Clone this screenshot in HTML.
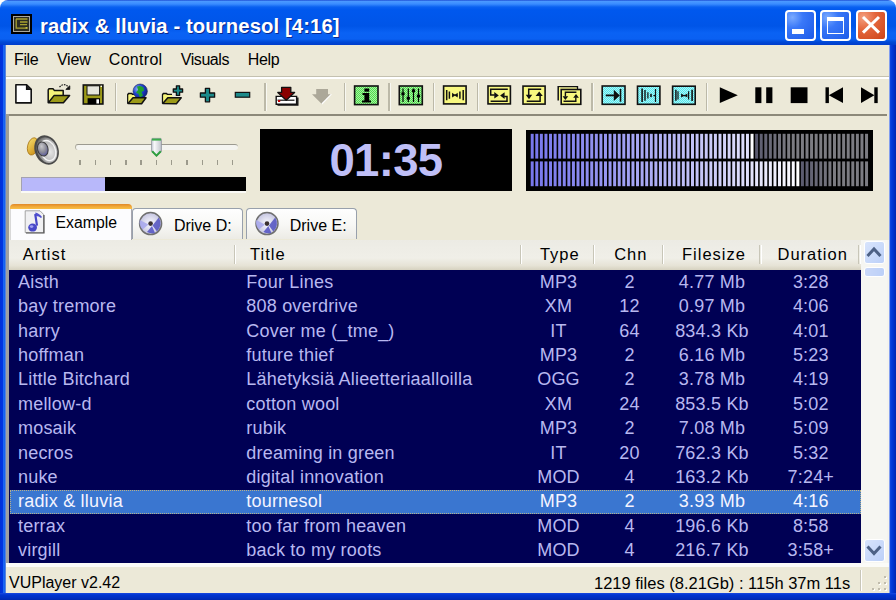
<!DOCTYPE html><html><head><meta charset="utf-8"><style>
*{margin:0;padding:0;box-sizing:border-box}
html,body{width:896px;height:600px;overflow:hidden;background:#fff}
body{position:relative;font-family:"Liberation Sans",sans-serif}
.a{position:absolute}
.t{position:absolute;white-space:nowrap;line-height:1}
</style></head><body>
<div class="a" style="left:0;top:0;width:896px;height:600px;border-radius:8px 8px 0 0;background:linear-gradient(to bottom,#1f4fd4 0px,#4a98ff 1.5px,#3a8cff 4px,#0b61f0 7px,#0058ee 10px,#0055e8 26px,#0a62f4 33px,#0a60f2 39px,#0049d6 42px,#003ccc 45px,#0038d8 46px);"></div>
<div class="a" style="left:0;top:45px;width:6px;height:555px;background:linear-gradient(to right,#0030d8 0,#0034e0 2.5px,#1a66f2 3.5px,#1560f0 5px,#9aa8c8 6px);"></div>
<div class="a" style="left:889px;top:45px;width:7px;height:555px;background:linear-gradient(to right,#f4f4ff 0,#1048e0 1px,#0038d8 3px,#0030c8 5px,#0028b0 7px);"></div>
<div class="a" style="left:0;top:593px;width:896px;height:7px;background:linear-gradient(to bottom,#1848e0 0,#0034d0 2px,#002ec0 5px,#0028b0 7px);"></div>
<div class="a" style="left:6px;top:45px;width:883px;height:548px;background:#ece9d8;"></div>
<div class="a" style="left:10.8px;top:14px;width:21.2px;height:19.5px;background:#000;"></div>
<div class="a" style="left:12.5px;top:15.5px;width:17.8px;height:16.5px;background:#2c2c22;border:1.4px solid #a8a8a0;"></div>
<svg class="a" style="left:0;top:0" width="60" height="45"><g stroke="#a8a030" stroke-width="1.3" fill="none"><path d="M16 19H27.5M16.2 19V28.2H27.5M20 22H27.5M20 24.6H27"/></g><rect x="25.6" y="27" width="1.8" height="1.6" fill="#c8c040"/></svg>
<div class="t" style="left:40px;top:15.9px;font-size:20.3px;font-weight:bold;color:#fff;text-shadow:1px 1px 0 #0a2a90;letter-spacing:0.1px">radix &amp; lluvia - tournesol [4:16]</div>
<div class="a" style="left:785px;top:10px;width:31px;height:31px;border:2px solid #fff;border-radius:4px;background:radial-gradient(circle at 20% 20%,#7aaaff 0,#3a78f8 35%,#1c5ae8 100%);"></div>
<div class="a" style="left:820px;top:10px;width:31px;height:31px;border:2px solid #fff;border-radius:4px;background:radial-gradient(circle at 20% 20%,#7aaaff 0,#3a78f8 35%,#1c5ae8 100%);"></div>
<div class="a" style="left:855.5px;top:10px;width:31px;height:31px;border:2px solid #fff;border-radius:4px;background:radial-gradient(circle at 20% 20%,#f4a080 0,#e4663c 40%,#cc4418 100%);"></div>
<div class="a" style="left:792px;top:29px;width:11.5px;height:4.5px;background:#fff;"></div>
<div class="a" style="left:827px;top:16.5px;width:16.5px;height:17px;border:1.6px solid #fff;border-top-width:4.5px;"></div>
<svg class="a" style="left:855px;top:10px" width="32" height="32"><path d="M8 7L24 22.6M24 7L8 22.6" stroke="#fff" stroke-width="3"/></svg>
<div class="t" style="left:14.1px;top:51.8px;font-size:16px;letter-spacing:-0.4px;color:#000">File</div>
<div class="t" style="left:56.9px;top:51.8px;font-size:16px;letter-spacing:-0.2px;color:#000">View</div>
<div class="t" style="left:108.8px;top:51.8px;font-size:16px;letter-spacing:0.3px;color:#000">Control</div>
<div class="t" style="left:180.8px;top:51.8px;font-size:16px;letter-spacing:-0.45px;color:#000">Visuals</div>
<div class="t" style="left:247.7px;top:51.8px;font-size:16px;letter-spacing:-0.3px;color:#000">Help</div>
<div class="a" style="left:6px;top:75.5px;width:883px;height:1.8px;background:#c4c1b0;"></div>
<div class="a" style="left:6px;top:77.3px;width:883px;height:1.7px;background:#fff;"></div>
<div class="a" style="left:6px;top:113.5px;width:881px;height:2px;background:#8c897a;"></div>
<div class="a" style="left:6px;top:113.5px;width:2.5px;height:127px;background:#a09e94;"></div>
<div class="a" style="left:114.5px;top:82.5px;width:1.6px;height:28.5px;background:#bcb9a8;"></div>
<div class="a" style="left:116.1px;top:82.5px;width:1px;height:28.5px;background:#f8f8f2;"></div>
<div class="a" style="left:264.2px;top:82.5px;width:1.6px;height:28.5px;background:#bcb9a8;"></div>
<div class="a" style="left:265.8px;top:82.5px;width:1px;height:28.5px;background:#f8f8f2;"></div>
<div class="a" style="left:343.5px;top:82.5px;width:1.6px;height:28.5px;background:#bcb9a8;"></div>
<div class="a" style="left:345.1px;top:82.5px;width:1px;height:28.5px;background:#f8f8f2;"></div>
<div class="a" style="left:388px;top:82.5px;width:1.6px;height:28.5px;background:#bcb9a8;"></div>
<div class="a" style="left:389.6px;top:82.5px;width:1px;height:28.5px;background:#f8f8f2;"></div>
<div class="a" style="left:432.6px;top:82.5px;width:1.6px;height:28.5px;background:#bcb9a8;"></div>
<div class="a" style="left:434.20000000000005px;top:82.5px;width:1px;height:28.5px;background:#f8f8f2;"></div>
<div class="a" style="left:476.6px;top:82.5px;width:1.6px;height:28.5px;background:#bcb9a8;"></div>
<div class="a" style="left:478.20000000000005px;top:82.5px;width:1px;height:28.5px;background:#f8f8f2;"></div>
<div class="a" style="left:591.2px;top:82.5px;width:1.6px;height:28.5px;background:#bcb9a8;"></div>
<div class="a" style="left:592.8000000000001px;top:82.5px;width:1px;height:28.5px;background:#f8f8f2;"></div>
<div class="a" style="left:705.5px;top:82.5px;width:1.6px;height:28.5px;background:#bcb9a8;"></div>
<div class="a" style="left:707.1px;top:82.5px;width:1px;height:28.5px;background:#f8f8f2;"></div>
<div class="a" style="left:75px;top:143.5px;width:163px;height:6px;border-radius:3px;background:#f4f4f0;border-top:1.5px solid #9c9a90;border-left:1px solid #b0aea0"></div>
<div class="a" style="left:79.40px;top:159.6px;width:1.4px;height:5px;background:#9c9a8c;"></div>
<div class="a" style="left:94.67px;top:159.6px;width:1.4px;height:5px;background:#9c9a8c;"></div>
<div class="a" style="left:109.94px;top:159.6px;width:1.4px;height:5px;background:#9c9a8c;"></div>
<div class="a" style="left:125.21px;top:159.6px;width:1.4px;height:5px;background:#9c9a8c;"></div>
<div class="a" style="left:140.48px;top:159.6px;width:1.4px;height:5px;background:#9c9a8c;"></div>
<div class="a" style="left:155.75px;top:159.6px;width:1.4px;height:5px;background:#9c9a8c;"></div>
<div class="a" style="left:171.02px;top:159.6px;width:1.4px;height:5px;background:#9c9a8c;"></div>
<div class="a" style="left:186.29px;top:159.6px;width:1.4px;height:5px;background:#9c9a8c;"></div>
<div class="a" style="left:201.56px;top:159.6px;width:1.4px;height:5px;background:#9c9a8c;"></div>
<div class="a" style="left:216.83px;top:159.6px;width:1.4px;height:5px;background:#9c9a8c;"></div>
<div class="a" style="left:232.10px;top:159.6px;width:1.4px;height:5px;background:#9c9a8c;"></div>
<div class="a" style="left:21.3px;top:177.2px;width:224.7px;height:13.8px;background:#000;"></div>
<div class="a" style="left:21.3px;top:177.2px;width:83.9px;height:13.8px;background:#b8b8fa;border-top:1.6px solid #a4a2b0;border-left:1.6px solid #a4a2b0"></div>
<div class="a" style="left:21.3px;top:191px;width:225px;height:1.5px;background:#fafaf6;"></div>
<div class="a" style="left:260.3px;top:129.2px;width:251.5px;height:61.6px;background:#000;"></div>
<div class="t" style="left:329.5px;top:137.8px;font-size:45.5px;letter-spacing:-0.7px;font-weight:bold;color:#bfbff7">01:35</div>
<div class="a" style="left:526.3px;top:129.5px;width:346.7px;height:61px;background:#000;"></div>
<svg class="a" style="left:0;top:0" width="896" height="200"><rect x="530.70" y="133.8" width="3.0" height="24.8" fill="rgb(120, 120, 236)"/><rect x="535.28" y="133.8" width="3.0" height="24.8" fill="rgb(121, 121, 236)"/><rect x="539.86" y="133.8" width="3.0" height="24.8" fill="rgb(123, 123, 236)"/><rect x="544.44" y="133.8" width="3.0" height="24.8" fill="rgb(124, 124, 237)"/><rect x="549.02" y="133.8" width="3.0" height="24.8" fill="rgb(126, 126, 237)"/><rect x="553.60" y="133.8" width="3.0" height="24.8" fill="rgb(128, 128, 237)"/><rect x="558.18" y="133.8" width="3.0" height="24.8" fill="rgb(130, 130, 237)"/><rect x="562.76" y="133.8" width="3.0" height="24.8" fill="rgb(132, 132, 238)"/><rect x="567.34" y="133.8" width="3.0" height="24.8" fill="rgb(134, 134, 238)"/><rect x="571.92" y="133.8" width="3.0" height="24.8" fill="rgb(135, 135, 238)"/><rect x="576.50" y="133.8" width="3.0" height="24.8" fill="rgb(137, 137, 239)"/><rect x="581.08" y="133.8" width="3.0" height="24.8" fill="rgb(140, 140, 239)"/><rect x="585.66" y="133.8" width="3.0" height="24.8" fill="rgb(142, 142, 239)"/><rect x="590.24" y="133.8" width="3.0" height="24.8" fill="rgb(144, 144, 239)"/><rect x="594.82" y="133.8" width="3.0" height="24.8" fill="rgb(146, 146, 240)"/><rect x="599.40" y="133.8" width="3.0" height="24.8" fill="rgb(148, 148, 240)"/><rect x="603.98" y="133.8" width="3.0" height="24.8" fill="rgb(150, 150, 240)"/><rect x="608.56" y="133.8" width="3.0" height="24.8" fill="rgb(152, 152, 241)"/><rect x="613.14" y="133.8" width="3.0" height="24.8" fill="rgb(154, 154, 241)"/><rect x="617.72" y="133.8" width="3.0" height="24.8" fill="rgb(157, 157, 241)"/><rect x="622.30" y="133.8" width="3.0" height="24.8" fill="rgb(159, 159, 242)"/><rect x="626.88" y="133.8" width="3.0" height="24.8" fill="rgb(161, 161, 242)"/><rect x="631.46" y="133.8" width="3.0" height="24.8" fill="rgb(163, 163, 242)"/><rect x="636.04" y="133.8" width="3.0" height="24.8" fill="rgb(166, 166, 243)"/><rect x="640.62" y="133.8" width="3.0" height="24.8" fill="rgb(168, 168, 243)"/><rect x="645.20" y="133.8" width="3.0" height="24.8" fill="rgb(170, 170, 243)"/><rect x="649.78" y="133.8" width="3.0" height="24.8" fill="rgb(172, 172, 244)"/><rect x="654.36" y="133.8" width="3.0" height="24.8" fill="rgb(175, 175, 244)"/><rect x="658.94" y="133.8" width="3.0" height="24.8" fill="rgb(177, 177, 244)"/><rect x="663.52" y="133.8" width="3.0" height="24.8" fill="rgb(179, 179, 245)"/><rect x="668.10" y="133.8" width="3.0" height="24.8" fill="rgb(182, 182, 245)"/><rect x="672.68" y="133.8" width="3.0" height="24.8" fill="rgb(184, 184, 245)"/><rect x="677.26" y="133.8" width="3.0" height="24.8" fill="rgb(187, 187, 246)"/><rect x="681.84" y="133.8" width="3.0" height="24.8" fill="rgb(189, 189, 246)"/><rect x="686.42" y="133.8" width="3.0" height="24.8" fill="rgb(191, 191, 246)"/><rect x="691.00" y="133.8" width="3.0" height="24.8" fill="rgb(194, 194, 247)"/><rect x="695.58" y="133.8" width="3.0" height="24.8" fill="rgb(196, 196, 247)"/><rect x="700.16" y="133.8" width="3.0" height="24.8" fill="rgb(199, 199, 247)"/><rect x="704.74" y="133.8" width="3.0" height="24.8" fill="rgb(201, 201, 248)"/><rect x="709.32" y="133.8" width="3.0" height="24.8" fill="rgb(204, 204, 248)"/><rect x="713.90" y="133.8" width="3.0" height="24.8" fill="rgb(206, 206, 248)"/><rect x="718.48" y="133.8" width="3.0" height="24.8" fill="rgb(209, 209, 249)"/><rect x="723.06" y="133.8" width="3.0" height="24.8" fill="rgb(211, 211, 249)"/><rect x="727.64" y="133.8" width="3.0" height="24.8" fill="rgb(214, 214, 249)"/><rect x="732.22" y="133.8" width="3.0" height="24.8" fill="rgb(216, 216, 250)"/><rect x="736.80" y="133.8" width="3.0" height="24.8" fill="rgb(219, 219, 250)"/><rect x="741.38" y="133.8" width="3.0" height="24.8" fill="rgb(221, 221, 251)"/><rect x="745.96" y="133.8" width="3.0" height="24.8" fill="rgb(224, 224, 251)"/><rect x="750.54" y="133.8" width="3.0" height="24.8" fill="rgb(255, 255, 255)"/><rect x="755.12" y="133.8" width="3.0" height="24.8" fill="rgb(91, 91, 111)"/><rect x="759.70" y="133.8" width="3.0" height="24.8" fill="rgb(96, 96, 114)"/><rect x="764.28" y="133.8" width="3.0" height="24.8" fill="rgb(100, 100, 116)"/><rect x="768.86" y="133.8" width="3.0" height="24.8" fill="rgb(105, 105, 119)"/><rect x="773.44" y="133.8" width="3.0" height="24.8" fill="rgb(110, 110, 122)"/><rect x="778.02" y="133.8" width="3.0" height="24.8" fill="rgb(114, 114, 124)"/><rect x="782.60" y="133.8" width="3.0" height="24.8" fill="rgb(119, 119, 127)"/><rect x="787.18" y="133.8" width="3.0" height="24.8" fill="rgb(124, 124, 130)"/><rect x="791.76" y="133.8" width="3.0" height="24.8" fill="rgb(124, 124, 130)"/><rect x="796.34" y="133.8" width="3.0" height="24.8" fill="rgb(124, 124, 130)"/><rect x="800.92" y="133.8" width="3.0" height="24.8" fill="rgb(124, 124, 130)"/><rect x="805.50" y="133.8" width="3.0" height="24.8" fill="rgb(124, 124, 130)"/><rect x="810.08" y="133.8" width="3.0" height="24.8" fill="rgb(124, 124, 130)"/><rect x="814.66" y="133.8" width="3.0" height="24.8" fill="rgb(124, 124, 130)"/><rect x="819.24" y="133.8" width="3.0" height="24.8" fill="rgb(124, 124, 130)"/><rect x="823.82" y="133.8" width="3.0" height="24.8" fill="rgb(124, 124, 130)"/><rect x="828.40" y="133.8" width="3.0" height="24.8" fill="rgb(124, 124, 130)"/><rect x="832.98" y="133.8" width="3.0" height="24.8" fill="rgb(124, 124, 130)"/><rect x="837.56" y="133.8" width="3.0" height="24.8" fill="rgb(124, 124, 130)"/><rect x="842.14" y="133.8" width="3.0" height="24.8" fill="rgb(124, 124, 130)"/><rect x="846.72" y="133.8" width="3.0" height="24.8" fill="rgb(124, 124, 130)"/><rect x="851.30" y="133.8" width="3.0" height="24.8" fill="rgb(124, 124, 130)"/><rect x="855.88" y="133.8" width="3.0" height="24.8" fill="rgb(124, 124, 130)"/><rect x="860.46" y="133.8" width="3.0" height="24.8" fill="rgb(124, 124, 130)"/><rect x="865.04" y="133.8" width="3.0" height="24.8" fill="rgb(124, 124, 130)"/><rect x="530.70" y="161.4" width="3.0" height="24.8" fill="rgb(120, 120, 236)"/><rect x="535.28" y="161.4" width="3.0" height="24.8" fill="rgb(121, 121, 236)"/><rect x="539.86" y="161.4" width="3.0" height="24.8" fill="rgb(123, 123, 236)"/><rect x="544.44" y="161.4" width="3.0" height="24.8" fill="rgb(124, 124, 237)"/><rect x="549.02" y="161.4" width="3.0" height="24.8" fill="rgb(126, 126, 237)"/><rect x="553.60" y="161.4" width="3.0" height="24.8" fill="rgb(128, 128, 237)"/><rect x="558.18" y="161.4" width="3.0" height="24.8" fill="rgb(130, 130, 237)"/><rect x="562.76" y="161.4" width="3.0" height="24.8" fill="rgb(132, 132, 238)"/><rect x="567.34" y="161.4" width="3.0" height="24.8" fill="rgb(134, 134, 238)"/><rect x="571.92" y="161.4" width="3.0" height="24.8" fill="rgb(135, 135, 238)"/><rect x="576.50" y="161.4" width="3.0" height="24.8" fill="rgb(137, 137, 239)"/><rect x="581.08" y="161.4" width="3.0" height="24.8" fill="rgb(140, 140, 239)"/><rect x="585.66" y="161.4" width="3.0" height="24.8" fill="rgb(142, 142, 239)"/><rect x="590.24" y="161.4" width="3.0" height="24.8" fill="rgb(144, 144, 239)"/><rect x="594.82" y="161.4" width="3.0" height="24.8" fill="rgb(146, 146, 240)"/><rect x="599.40" y="161.4" width="3.0" height="24.8" fill="rgb(148, 148, 240)"/><rect x="603.98" y="161.4" width="3.0" height="24.8" fill="rgb(150, 150, 240)"/><rect x="608.56" y="161.4" width="3.0" height="24.8" fill="rgb(152, 152, 241)"/><rect x="613.14" y="161.4" width="3.0" height="24.8" fill="rgb(154, 154, 241)"/><rect x="617.72" y="161.4" width="3.0" height="24.8" fill="rgb(157, 157, 241)"/><rect x="622.30" y="161.4" width="3.0" height="24.8" fill="rgb(159, 159, 242)"/><rect x="626.88" y="161.4" width="3.0" height="24.8" fill="rgb(161, 161, 242)"/><rect x="631.46" y="161.4" width="3.0" height="24.8" fill="rgb(163, 163, 242)"/><rect x="636.04" y="161.4" width="3.0" height="24.8" fill="rgb(166, 166, 243)"/><rect x="640.62" y="161.4" width="3.0" height="24.8" fill="rgb(168, 168, 243)"/><rect x="645.20" y="161.4" width="3.0" height="24.8" fill="rgb(170, 170, 243)"/><rect x="649.78" y="161.4" width="3.0" height="24.8" fill="rgb(172, 172, 244)"/><rect x="654.36" y="161.4" width="3.0" height="24.8" fill="rgb(175, 175, 244)"/><rect x="658.94" y="161.4" width="3.0" height="24.8" fill="rgb(177, 177, 244)"/><rect x="663.52" y="161.4" width="3.0" height="24.8" fill="rgb(179, 179, 245)"/><rect x="668.10" y="161.4" width="3.0" height="24.8" fill="rgb(182, 182, 245)"/><rect x="672.68" y="161.4" width="3.0" height="24.8" fill="rgb(184, 184, 245)"/><rect x="677.26" y="161.4" width="3.0" height="24.8" fill="rgb(187, 187, 246)"/><rect x="681.84" y="161.4" width="3.0" height="24.8" fill="rgb(189, 189, 246)"/><rect x="686.42" y="161.4" width="3.0" height="24.8" fill="rgb(191, 191, 246)"/><rect x="691.00" y="161.4" width="3.0" height="24.8" fill="rgb(194, 194, 247)"/><rect x="695.58" y="161.4" width="3.0" height="24.8" fill="rgb(196, 196, 247)"/><rect x="700.16" y="161.4" width="3.0" height="24.8" fill="rgb(199, 199, 247)"/><rect x="704.74" y="161.4" width="3.0" height="24.8" fill="rgb(201, 201, 248)"/><rect x="709.32" y="161.4" width="3.0" height="24.8" fill="rgb(204, 204, 248)"/><rect x="713.90" y="161.4" width="3.0" height="24.8" fill="rgb(206, 206, 248)"/><rect x="718.48" y="161.4" width="3.0" height="24.8" fill="rgb(209, 209, 249)"/><rect x="723.06" y="161.4" width="3.0" height="24.8" fill="rgb(211, 211, 249)"/><rect x="727.64" y="161.4" width="3.0" height="24.8" fill="rgb(214, 214, 249)"/><rect x="732.22" y="161.4" width="3.0" height="24.8" fill="rgb(216, 216, 250)"/><rect x="736.80" y="161.4" width="3.0" height="24.8" fill="rgb(219, 219, 250)"/><rect x="741.38" y="161.4" width="3.0" height="24.8" fill="rgb(221, 221, 251)"/><rect x="745.96" y="161.4" width="3.0" height="24.8" fill="rgb(224, 224, 251)"/><rect x="750.54" y="161.4" width="3.0" height="24.8" fill="rgb(226, 226, 251)"/><rect x="755.12" y="161.4" width="3.0" height="24.8" fill="rgb(229, 229, 252)"/><rect x="759.70" y="161.4" width="3.0" height="24.8" fill="rgb(231, 231, 252)"/><rect x="764.28" y="161.4" width="3.0" height="24.8" fill="rgb(234, 234, 252)"/><rect x="768.86" y="161.4" width="3.0" height="24.8" fill="rgb(236, 236, 253)"/><rect x="773.44" y="161.4" width="3.0" height="24.8" fill="rgb(239, 239, 253)"/><rect x="778.02" y="161.4" width="3.0" height="24.8" fill="rgb(242, 242, 254)"/><rect x="782.60" y="161.4" width="3.0" height="24.8" fill="rgb(244, 244, 254)"/><rect x="787.18" y="161.4" width="3.0" height="24.8" fill="rgb(247, 247, 254)"/><rect x="791.76" y="161.4" width="3.0" height="24.8" fill="rgb(249, 249, 255)"/><rect x="796.34" y="161.4" width="3.0" height="24.8" fill="rgb(255, 255, 255)"/><rect x="800.92" y="161.4" width="3.0" height="24.8" fill="rgb(91, 91, 111)"/><rect x="805.50" y="161.4" width="3.0" height="24.8" fill="rgb(96, 96, 114)"/><rect x="810.08" y="161.4" width="3.0" height="24.8" fill="rgb(100, 100, 116)"/><rect x="814.66" y="161.4" width="3.0" height="24.8" fill="rgb(105, 105, 119)"/><rect x="819.24" y="161.4" width="3.0" height="24.8" fill="rgb(110, 110, 122)"/><rect x="823.82" y="161.4" width="3.0" height="24.8" fill="rgb(114, 114, 124)"/><rect x="828.40" y="161.4" width="3.0" height="24.8" fill="rgb(119, 119, 127)"/><rect x="832.98" y="161.4" width="3.0" height="24.8" fill="rgb(124, 124, 130)"/><rect x="837.56" y="161.4" width="3.0" height="24.8" fill="rgb(124, 124, 130)"/><rect x="842.14" y="161.4" width="3.0" height="24.8" fill="rgb(124, 124, 130)"/><rect x="846.72" y="161.4" width="3.0" height="24.8" fill="rgb(124, 124, 130)"/><rect x="851.30" y="161.4" width="3.0" height="24.8" fill="rgb(124, 124, 130)"/><rect x="855.88" y="161.4" width="3.0" height="24.8" fill="rgb(124, 124, 130)"/><rect x="860.46" y="161.4" width="3.0" height="24.8" fill="rgb(124, 124, 130)"/><rect x="865.04" y="161.4" width="3.0" height="24.8" fill="rgb(124, 124, 130)"/></svg>
<div class="a" style="left:10.2px;top:205px;width:121.5px;height:35px;background:#fcfcfe;border-radius:4px 4px 0 0;border-left:1px solid #d8d8d8;border-right:1px solid #a8a8b0"></div>
<div class="a" style="left:10.2px;top:204.2px;width:121.5px;height:4.6px;background:linear-gradient(to bottom,#e0882a 0,#f0a838 50%,#f8c048 100%);border-radius:4px 4px 0 0"></div>
<div class="a" style="left:132px;top:208.3px;width:111px;height:31px;border:1.3px solid #98a0ac;border-bottom:none;border-radius:4px 4px 0 0;background:linear-gradient(to bottom,#fefefe 0,#f8f8f6 50%,#ecebe5 100%)"></div>
<div class="a" style="left:246.2px;top:208.3px;width:110.6px;height:31px;border:1.3px solid #98a0ac;border-bottom:none;border-radius:4px 4px 0 0;background:linear-gradient(to bottom,#fefefe 0,#f8f8f6 50%,#ecebe5 100%)"></div>
<div class="t" style="left:55.5px;top:214.8px;font-size:15.8px;color:#000">Example</div>
<div class="t" style="left:173.9px;top:218.2px;font-size:16px;color:#000">Drive D:</div>
<div class="t" style="left:289.7px;top:218.2px;font-size:16px;color:#000">Drive E:</div>
<div class="a" style="left:6px;top:239.5px;width:883px;height:328px;background:#a0a0a0"></div>
<div class="a" style="left:8.5px;top:240px;width:880px;height:327px;background:#f4f3ee"></div>
<div class="a" style="left:9px;top:240px;width:852px;height:30px;background:linear-gradient(to bottom,#ecebe4 0,#f0efe8 60%,#e6e3d6 85%,#d6d2c0 100%)"></div>
<div class="a" style="left:233.9px;top:244.5px;width:1.3px;height:19px;background:#c8c6b8"></div>
<div class="a" style="left:235.2px;top:244.5px;width:1px;height:19px;background:#fff"></div>
<div class="a" style="left:519.6px;top:244.5px;width:1.3px;height:19px;background:#c8c6b8"></div>
<div class="a" style="left:520.9000000000001px;top:244.5px;width:1px;height:19px;background:#fff"></div>
<div class="a" style="left:592.6999999999999px;top:244.5px;width:1.3px;height:19px;background:#c8c6b8"></div>
<div class="a" style="left:594.0px;top:244.5px;width:1px;height:19px;background:#fff"></div>
<div class="a" style="left:661.6999999999999px;top:244.5px;width:1.3px;height:19px;background:#c8c6b8"></div>
<div class="a" style="left:663.0px;top:244.5px;width:1px;height:19px;background:#fff"></div>
<div class="a" style="left:759.1999999999999px;top:244.5px;width:1.3px;height:19px;background:#c8c6b8"></div>
<div class="a" style="left:760.5px;top:244.5px;width:1px;height:19px;background:#fff"></div>
<div class="a" style="left:858.1999999999999px;top:244.5px;width:1.3px;height:19px;background:#c8c6b8"></div>
<div class="a" style="left:859.5px;top:244.5px;width:1px;height:19px;background:#fff"></div>
<div class="t" style="left:22.7px;top:246.2px;font-size:16.5px;letter-spacing:1px;color:#000">Artist</div>
<div class="t" style="left:250px;top:246.2px;font-size:16.5px;letter-spacing:1px;color:#000">Title</div>
<div class="t" style="left:499.79999999999995px;width:120px;text-align:center;top:246.2px;font-size:16.5px;letter-spacing:1px;color:#000">Type</div>
<div class="t" style="left:570.8px;width:120px;text-align:center;top:246.2px;font-size:16.5px;letter-spacing:1px;color:#000">Chn</div>
<div class="t" style="left:654px;width:120px;text-align:center;top:246.2px;font-size:16.5px;letter-spacing:1px;color:#000">Filesize</div>
<div class="t" style="left:752.7px;width:120px;text-align:center;top:246.2px;font-size:16.5px;letter-spacing:1px;color:#000">Duration</div>
<div class="a" style="left:9px;top:270px;width:852px;height:293px;background:#000054"></div>
<div class="t" style="left:18px;top:272.80px;font-size:18px;letter-spacing:0.2px;color:#b8b8f0">Aisth</div>
<div class="t" style="left:246.3px;top:272.80px;font-size:18px;letter-spacing:0.2px;color:#b8b8f0">Four Lines</div>
<div class="t" style="left:498.5px;width:120px;text-align:center;top:272.80px;font-size:18px;letter-spacing:0.2px;color:#b8b8f0">MP3</div>
<div class="t" style="left:569.5px;width:120px;text-align:center;top:272.80px;font-size:18px;letter-spacing:0.2px;color:#b8b8f0">2</div>
<div class="t" style="left:652.0px;width:120px;text-align:center;top:272.80px;font-size:18px;letter-spacing:0.2px;color:#b8b8f0">4.77 Mb</div>
<div class="t" style="left:750.8px;width:120px;text-align:center;top:272.80px;font-size:18px;letter-spacing:0.2px;color:#b8b8f0">3:28</div>
<div class="t" style="left:18px;top:297.20px;font-size:18px;letter-spacing:0.2px;color:#b8b8f0">bay tremore</div>
<div class="t" style="left:246.3px;top:297.20px;font-size:18px;letter-spacing:0.2px;color:#b8b8f0">808 overdrive</div>
<div class="t" style="left:498.5px;width:120px;text-align:center;top:297.20px;font-size:18px;letter-spacing:0.2px;color:#b8b8f0">XM</div>
<div class="t" style="left:569.5px;width:120px;text-align:center;top:297.20px;font-size:18px;letter-spacing:0.2px;color:#b8b8f0">12</div>
<div class="t" style="left:652.0px;width:120px;text-align:center;top:297.20px;font-size:18px;letter-spacing:0.2px;color:#b8b8f0">0.97 Mb</div>
<div class="t" style="left:750.8px;width:120px;text-align:center;top:297.20px;font-size:18px;letter-spacing:0.2px;color:#b8b8f0">4:06</div>
<div class="t" style="left:18px;top:321.60px;font-size:18px;letter-spacing:0.2px;color:#b8b8f0">harry</div>
<div class="t" style="left:246.3px;top:321.60px;font-size:18px;letter-spacing:0.2px;color:#b8b8f0">Cover me (_tme_)</div>
<div class="t" style="left:498.5px;width:120px;text-align:center;top:321.60px;font-size:18px;letter-spacing:0.2px;color:#b8b8f0">IT</div>
<div class="t" style="left:569.5px;width:120px;text-align:center;top:321.60px;font-size:18px;letter-spacing:0.2px;color:#b8b8f0">64</div>
<div class="t" style="left:652.0px;width:120px;text-align:center;top:321.60px;font-size:18px;letter-spacing:0.2px;color:#b8b8f0">834.3 Kb</div>
<div class="t" style="left:750.8px;width:120px;text-align:center;top:321.60px;font-size:18px;letter-spacing:0.2px;color:#b8b8f0">4:01</div>
<div class="t" style="left:18px;top:346.00px;font-size:18px;letter-spacing:0.2px;color:#b8b8f0">hoffman</div>
<div class="t" style="left:246.3px;top:346.00px;font-size:18px;letter-spacing:0.2px;color:#b8b8f0">future thief</div>
<div class="t" style="left:498.5px;width:120px;text-align:center;top:346.00px;font-size:18px;letter-spacing:0.2px;color:#b8b8f0">MP3</div>
<div class="t" style="left:569.5px;width:120px;text-align:center;top:346.00px;font-size:18px;letter-spacing:0.2px;color:#b8b8f0">2</div>
<div class="t" style="left:652.0px;width:120px;text-align:center;top:346.00px;font-size:18px;letter-spacing:0.2px;color:#b8b8f0">6.16 Mb</div>
<div class="t" style="left:750.8px;width:120px;text-align:center;top:346.00px;font-size:18px;letter-spacing:0.2px;color:#b8b8f0">5:23</div>
<div class="t" style="left:18px;top:370.40px;font-size:18px;letter-spacing:0.2px;color:#b8b8f0">Little Bitchard</div>
<div class="t" style="left:246.3px;top:370.40px;font-size:18px;letter-spacing:0.2px;color:#b8b8f0">Lähetyksiä Alieetteriaalloilla</div>
<div class="t" style="left:498.5px;width:120px;text-align:center;top:370.40px;font-size:18px;letter-spacing:0.2px;color:#b8b8f0">OGG</div>
<div class="t" style="left:569.5px;width:120px;text-align:center;top:370.40px;font-size:18px;letter-spacing:0.2px;color:#b8b8f0">2</div>
<div class="t" style="left:652.0px;width:120px;text-align:center;top:370.40px;font-size:18px;letter-spacing:0.2px;color:#b8b8f0">3.78 Mb</div>
<div class="t" style="left:750.8px;width:120px;text-align:center;top:370.40px;font-size:18px;letter-spacing:0.2px;color:#b8b8f0">4:19</div>
<div class="t" style="left:18px;top:394.80px;font-size:18px;letter-spacing:0.2px;color:#b8b8f0">mellow-d</div>
<div class="t" style="left:246.3px;top:394.80px;font-size:18px;letter-spacing:0.2px;color:#b8b8f0">cotton wool</div>
<div class="t" style="left:498.5px;width:120px;text-align:center;top:394.80px;font-size:18px;letter-spacing:0.2px;color:#b8b8f0">XM</div>
<div class="t" style="left:569.5px;width:120px;text-align:center;top:394.80px;font-size:18px;letter-spacing:0.2px;color:#b8b8f0">24</div>
<div class="t" style="left:652.0px;width:120px;text-align:center;top:394.80px;font-size:18px;letter-spacing:0.2px;color:#b8b8f0">853.5 Kb</div>
<div class="t" style="left:750.8px;width:120px;text-align:center;top:394.80px;font-size:18px;letter-spacing:0.2px;color:#b8b8f0">5:02</div>
<div class="t" style="left:18px;top:419.20px;font-size:18px;letter-spacing:0.2px;color:#b8b8f0">mosaik</div>
<div class="t" style="left:246.3px;top:419.20px;font-size:18px;letter-spacing:0.2px;color:#b8b8f0">rubik</div>
<div class="t" style="left:498.5px;width:120px;text-align:center;top:419.20px;font-size:18px;letter-spacing:0.2px;color:#b8b8f0">MP3</div>
<div class="t" style="left:569.5px;width:120px;text-align:center;top:419.20px;font-size:18px;letter-spacing:0.2px;color:#b8b8f0">2</div>
<div class="t" style="left:652.0px;width:120px;text-align:center;top:419.20px;font-size:18px;letter-spacing:0.2px;color:#b8b8f0">7.08 Mb</div>
<div class="t" style="left:750.8px;width:120px;text-align:center;top:419.20px;font-size:18px;letter-spacing:0.2px;color:#b8b8f0">5:09</div>
<div class="t" style="left:18px;top:443.60px;font-size:18px;letter-spacing:0.2px;color:#b8b8f0">necros</div>
<div class="t" style="left:246.3px;top:443.60px;font-size:18px;letter-spacing:0.2px;color:#b8b8f0">dreaming in green</div>
<div class="t" style="left:498.5px;width:120px;text-align:center;top:443.60px;font-size:18px;letter-spacing:0.2px;color:#b8b8f0">IT</div>
<div class="t" style="left:569.5px;width:120px;text-align:center;top:443.60px;font-size:18px;letter-spacing:0.2px;color:#b8b8f0">20</div>
<div class="t" style="left:652.0px;width:120px;text-align:center;top:443.60px;font-size:18px;letter-spacing:0.2px;color:#b8b8f0">762.3 Kb</div>
<div class="t" style="left:750.8px;width:120px;text-align:center;top:443.60px;font-size:18px;letter-spacing:0.2px;color:#b8b8f0">5:32</div>
<div class="t" style="left:18px;top:468.00px;font-size:18px;letter-spacing:0.2px;color:#b8b8f0">nuke</div>
<div class="t" style="left:246.3px;top:468.00px;font-size:18px;letter-spacing:0.2px;color:#b8b8f0">digital innovation</div>
<div class="t" style="left:498.5px;width:120px;text-align:center;top:468.00px;font-size:18px;letter-spacing:0.2px;color:#b8b8f0">MOD</div>
<div class="t" style="left:569.5px;width:120px;text-align:center;top:468.00px;font-size:18px;letter-spacing:0.2px;color:#b8b8f0">4</div>
<div class="t" style="left:652.0px;width:120px;text-align:center;top:468.00px;font-size:18px;letter-spacing:0.2px;color:#b8b8f0">163.2 Kb</div>
<div class="t" style="left:750.8px;width:120px;text-align:center;top:468.00px;font-size:18px;letter-spacing:0.2px;color:#b8b8f0">7:24+</div>
<div class="a" style="left:9.5px;top:489.60px;width:851.5px;height:24.40px;background:#3a76d0;outline:1.2px dotted #b8b088;outline-offset:-1.2px"></div>
<div class="t" style="left:18px;top:492.40px;font-size:18px;letter-spacing:0.2px;color:#f4f4ff">radix &amp; lluvia</div>
<div class="t" style="left:246.3px;top:492.40px;font-size:18px;letter-spacing:0.2px;color:#f4f4ff">tournesol</div>
<div class="t" style="left:498.5px;width:120px;text-align:center;top:492.40px;font-size:18px;letter-spacing:0.2px;color:#f4f4ff">MP3</div>
<div class="t" style="left:569.5px;width:120px;text-align:center;top:492.40px;font-size:18px;letter-spacing:0.2px;color:#f4f4ff">2</div>
<div class="t" style="left:652.0px;width:120px;text-align:center;top:492.40px;font-size:18px;letter-spacing:0.2px;color:#f4f4ff">3.93 Mb</div>
<div class="t" style="left:750.8px;width:120px;text-align:center;top:492.40px;font-size:18px;letter-spacing:0.2px;color:#f4f4ff">4:16</div>
<div class="t" style="left:18px;top:516.80px;font-size:18px;letter-spacing:0.2px;color:#b8b8f0">terrax</div>
<div class="t" style="left:246.3px;top:516.80px;font-size:18px;letter-spacing:0.2px;color:#b8b8f0">too far from heaven</div>
<div class="t" style="left:498.5px;width:120px;text-align:center;top:516.80px;font-size:18px;letter-spacing:0.2px;color:#b8b8f0">MOD</div>
<div class="t" style="left:569.5px;width:120px;text-align:center;top:516.80px;font-size:18px;letter-spacing:0.2px;color:#b8b8f0">4</div>
<div class="t" style="left:652.0px;width:120px;text-align:center;top:516.80px;font-size:18px;letter-spacing:0.2px;color:#b8b8f0">196.6 Kb</div>
<div class="t" style="left:750.8px;width:120px;text-align:center;top:516.80px;font-size:18px;letter-spacing:0.2px;color:#b8b8f0">8:58</div>
<div class="t" style="left:18px;top:541.20px;font-size:18px;letter-spacing:0.2px;color:#b8b8f0">virgill</div>
<div class="t" style="left:246.3px;top:541.20px;font-size:18px;letter-spacing:0.2px;color:#b8b8f0">back to my roots</div>
<div class="t" style="left:498.5px;width:120px;text-align:center;top:541.20px;font-size:18px;letter-spacing:0.2px;color:#b8b8f0">MOD</div>
<div class="t" style="left:569.5px;width:120px;text-align:center;top:541.20px;font-size:18px;letter-spacing:0.2px;color:#b8b8f0">4</div>
<div class="t" style="left:652.0px;width:120px;text-align:center;top:541.20px;font-size:18px;letter-spacing:0.2px;color:#b8b8f0">216.7 Kb</div>
<div class="t" style="left:750.8px;width:120px;text-align:center;top:541.20px;font-size:18px;letter-spacing:0.2px;color:#b8b8f0">3:58+</div>
<div class="a" style="left:861px;top:240px;width:26px;height:323px;background:#f6f6f2"></div>
<div class="a" style="left:863.5px;top:240.5px;width:21px;height:23px;border:1.2px solid #fff;border-radius:3px;background:linear-gradient(135deg,#d8e4fc 0,#bcd0f8 100%)"></div>
<div class="a" style="left:863.5px;top:266.5px;width:21px;height:10.5px;border:1.2px solid #fff;border-radius:3px;background:linear-gradient(to right,#cad8f8 0,#bcd0f8 100%)"></div>
<div class="a" style="left:863.5px;top:538.5px;width:21px;height:23.5px;border:1.2px solid #fff;border-radius:3px;background:linear-gradient(135deg,#d8e4fc 0,#bcd0f8 100%)"></div>
<svg class="a" style="left:0;top:0" width="896" height="600"><path d="M867.5 256L874 249L880.5 256" stroke="#4d6185" stroke-width="3" fill="none"/><path d="M867.5 546.5L874 553.5L880.5 546.5" stroke="#4d6185" stroke-width="3" fill="none"/></svg>
<div class="a" style="left:6px;top:563px;width:883px;height:4px;background:#fbfbf8"></div>
<div class="a" style="left:6px;top:567px;width:883px;height:26px;background:#ece9d8"></div>
<div class="t" style="left:9px;top:574.5px;font-size:16px;color:#000">VUPlayer v2.42</div>
<div class="t" style="left:594px;top:574.5px;font-size:16.5px;color:#000">1219 files (8.21Gb) : 115h 37m 11s</div>
<div class="a" style="left:859.8px;top:570px;width:1.3px;height:21px;background:#c8c6b8"></div>
<div class="a" style="left:861.1px;top:570px;width:1px;height:21px;background:#fff"></div>
<div class="a" style="left:884.5px;top:576.5px;width:2px;height:2px;background:#fff"></div>
<div class="a" style="left:883.5px;top:575.5px;width:2.2px;height:2.2px;background:#c0bcac"></div>
<div class="a" style="left:878.5px;top:582.5px;width:2px;height:2px;background:#fff"></div>
<div class="a" style="left:877.5px;top:581.5px;width:2.2px;height:2.2px;background:#c0bcac"></div>
<div class="a" style="left:884.5px;top:582.5px;width:2px;height:2px;background:#fff"></div>
<div class="a" style="left:883.5px;top:581.5px;width:2.2px;height:2.2px;background:#c0bcac"></div>
<div class="a" style="left:872.5px;top:588.5px;width:2px;height:2px;background:#fff"></div>
<div class="a" style="left:871.5px;top:587.5px;width:2.2px;height:2.2px;background:#c0bcac"></div>
<div class="a" style="left:878.5px;top:588.5px;width:2px;height:2px;background:#fff"></div>
<div class="a" style="left:877.5px;top:587.5px;width:2.2px;height:2.2px;background:#c0bcac"></div>
<div class="a" style="left:884.5px;top:588.5px;width:2px;height:2px;background:#fff"></div>
<div class="a" style="left:883.5px;top:587.5px;width:2.2px;height:2.2px;background:#c0bcac"></div>
<svg class="a" style="left:0;top:0" width="896" height="600">
<defs>
<pattern id="dg" width="2" height="2" patternUnits="userSpaceOnUse"><rect width="2" height="2" fill="#a8f0a0"/><rect width="1" height="1" fill="#50e050"/><rect x="1" y="1" width="1" height="1" fill="#50e050"/></pattern>
<pattern id="dc" width="2" height="2" patternUnits="userSpaceOnUse"><rect width="2" height="2" fill="#b0f4f4"/><rect width="1" height="1" fill="#50e8f0"/><rect x="1" y="1" width="1" height="1" fill="#50e8f0"/></pattern>
<radialGradient id="spk" cx="0.6" cy="0.6" r="0.6"><stop offset="0" stop-color="#e8e8e8"/><stop offset="0.7" stop-color="#b8b8b8"/><stop offset="1" stop-color="#707070"/></radialGradient>
<radialGradient id="dome" cx="0.45" cy="0.3" r="0.75"><stop offset="0" stop-color="#c8c8cc"/><stop offset="0.55" stop-color="#8c8c98"/><stop offset="1" stop-color="#5050a0"/></radialGradient>
<linearGradient id="gold" x1="0" y1="0" x2="1" y2="1"><stop offset="0" stop-color="#f8e070"/><stop offset="1" stop-color="#c88a10"/></linearGradient>
<radialGradient id="globe" cx="0.35" cy="0.35" r="0.7"><stop offset="0" stop-color="#a0c0ff"/><stop offset="0.5" stop-color="#2040d0"/><stop offset="1" stop-color="#102080"/></radialGradient>
<linearGradient id="thumb" x1="0" y1="0" x2="1" y2="0"><stop offset="0" stop-color="#c8ccd8"/><stop offset="0.3" stop-color="#f8f8fa"/><stop offset="1" stop-color="#c0c4cc"/></linearGradient>
</defs>
<!-- new page -->
<path d="M15.9 84.8H26.6L31.2 89.4V102.9H15.9Z" fill="#fff" stroke="#111" stroke-width="1.6" stroke-linejoin="round"/>
<path d="M26.6 85V89.4H31" fill="#222" stroke="#111" stroke-width="1.4"/>
<!-- open folder -->
<path d="M48.2 102.6V90L49 88.7H53L54.3 90.4H63.2V95" fill="#f6f47a" stroke="#111" stroke-width="1.5" stroke-linejoin="round"/>
<path d="M48.3 102.8L54.2 95.4H69.6L63.4 102.8Z" fill="#9c9a18" stroke="#111" stroke-width="1.5" stroke-linejoin="round"/>
<path d="M59.5 87.2Q63.5 82.5 68 86.5" fill="none" stroke="#222" stroke-width="1.2" stroke-dasharray="1.6 1"/>
<path d="M65.8 89.4L69.8 85.8V89.4Z" fill="#111" stroke="#111" stroke-width="0.8"/>
<!-- save -->
<rect x="83.3" y="85" width="19.6" height="19" fill="#9c9a18" stroke="#111" stroke-width="1.6"/>
<rect x="87" y="85.8" width="12.6" height="9.2" fill="#e6e6dc" stroke="#111" stroke-width="1"/>
<rect x="87.6" y="98.2" width="12.4" height="6" fill="#000"/>
<rect x="96.4" y="99.3" width="2.6" height="4.2" fill="#fff"/>
<rect x="100.6" y="85.6" width="1.4" height="1.4" fill="#fff"/>
<!-- globe folder -->
<path d="M127.8 103.4V94.5L128.6 93.4H131.6L132.8 94.6H136" fill="#f6f47a" stroke="#111" stroke-width="1.5"/>
<rect x="128.5" y="95" width="8" height="7.5" fill="#f6f47a"/>
<circle cx="140.2" cy="91.2" r="7.2" fill="url(#globe)" stroke="#203060" stroke-width="0.6"/>
<path d="M137 86.5Q141 85 143.5 87.5L144 90.5L141.5 92L143 95.5L140 97.5L138.5 94L136 92.5L138 90Z" fill="#20a030"/>
<path d="M128 103.6L133 97.8H146L141.6 103.8Z" fill="#9c9a18" stroke="#111" stroke-width="1.5" stroke-linejoin="round"/>
<!-- folder plus -->
<path d="M162.6 103.6V94.5L163.4 93.4H166.4L167.6 94.6H172" fill="#f6f47a" stroke="#111" stroke-width="1.5"/>
<rect x="163.3" y="95" width="9" height="7.5" fill="#f6f47a"/>
<path d="M162.8 103.6L167.8 97.8H181.2L176.4 103.8Z" fill="#9c9a18" stroke="#111" stroke-width="1.5" stroke-linejoin="round"/>
<path d="M176.4 85.8H179.6V89H182.6V92.2H179.6V95.4H176.4V92.2H173.3V89H176.4Z" fill="#1c8a8a" stroke="#111" stroke-width="1.3" stroke-linejoin="round"/>
<!-- plus -->
<path d="M205.4 88.4H209.6V93H214.6V97.2H209.6V101.8H205.4V97.2H200.4V93H205.4Z" fill="#1c8a8a" stroke="#111" stroke-width="1.3" stroke-linejoin="round"/>
<!-- minus -->
<rect x="235.3" y="92.4" width="14.4" height="4.8" fill="#1c8a8a" stroke="#111" stroke-width="1.2"/>
<!-- download -->
<path d="M276.2 96.4H296.6V104.2H276.2Z" fill="#fff" stroke="#111" stroke-width="1.4"/>
<path d="M277.5 105H297.8V97.5" fill="none" stroke="#111" stroke-width="1.4"/>
<path d="M277.5 100.2H294.5" stroke="#111" stroke-width="1.2"/>
<rect x="278" y="100" width="2.2" height="2" fill="#c00000"/>
<path d="M281.6 87.3H290.8V92.4H294.6L286.2 100.2L277.8 92.4H281.6Z" fill="#8a0000" stroke="#111" stroke-width="1.3" stroke-linejoin="round"/>
<!-- gray arrow -->
<path d="M316.2 89H328V94.2H331.4L321.8 104L312 94.2H316.2Z" fill="#aca899" stroke="#fff" stroke-width="0"/>
<path d="M331.4 94.2L321.8 104" stroke="#fff" stroke-width="1.2"/>
<!-- info green -->
<rect x="354.6" y="86" width="23.4" height="18.6" fill="url(#dg)" stroke="#111" stroke-width="1.6"/>
<rect x="364.4" y="88.5" width="4.8" height="3.2" fill="#000"/>
<path d="M362.5 93H369.2V100.5H371V102.4H362V100.5H364.4V95H362.5Z" fill="#000"/>
<!-- EQ -->
<rect x="399.3" y="86" width="23" height="18.6" fill="url(#dg)" stroke="#111" stroke-width="1.6"/>
<g stroke="#000" stroke-width="1.2"><path d="M403 88.5V102M408.3 88.5V102M413.5 88.5V102M418.5 88.5V102"/></g>
<g fill="#000"><rect x="401.4" y="92.4" width="3.2" height="2.8"/><rect x="406.7" y="96.8" width="3.2" height="2.8"/><rect x="411.9" y="89.4" width="3.2" height="2.8"/><rect x="416.9" y="94.6" width="3.2" height="2.8"/></g>
<!-- yellow 1 -->
<rect x="443.6" y="86" width="22.5" height="17.9" fill="#f8f880" stroke="#111" stroke-width="1.6"/>
<g stroke="#111" stroke-width="1.5"><path d="M446.7 90V100.2M449.4 91.6V98.8M459.9 91.6V98.8M463.2 90V100.2"/><path d="M452 95.2H457.8" stroke-width="1.2"/></g>
<path d="M452.1 92.8L455.6 95.2L452.1 97.6ZM457.7 92.8L454.2 95.2L457.7 97.6Z" fill="#111"/>
<!-- yellow A -->
<rect x="488" y="86" width="22.4" height="17.9" fill="#f8f880" stroke="#111" stroke-width="1.6"/>
<path d="M507.8 89.2H490.7V95H494.8M504.2 96.5H507V101.2H490.6" fill="none" stroke="#111" stroke-width="1.5"/>
<path d="M494.3 92L498.8 95.4L494.3 98.6ZM504.6 92.3L500.1 95.6L504.6 98.9Z" fill="#111"/>
<!-- yellow B -->
<rect x="523" y="86.1" width="22.1" height="18" fill="#f8f880" stroke="#111" stroke-width="1.6"/>
<path d="M541.2 89.3H528.7V95.3M540.1 95.8V101.3H526.7" fill="none" stroke="#111" stroke-width="1.5"/>
<path d="M525.8 94.8H532.2L529 99.2ZM535.6 96.1H542.8L539.2 91.4Z" fill="#111"/>
<!-- yellow C -->
<path d="M558.2 100.6V86.8H577.4V89" fill="none" stroke="#111" stroke-width="1.5"/>
<rect x="559" y="87.5" width="17.8" height="1.4" fill="#f8f880"/>
<rect x="559" y="87.5" width="1.4" height="12.6" fill="#f8f880"/>
<rect x="561.2" y="89.5" width="19.6" height="14.8" fill="#f8f880" stroke="#111" stroke-width="1.6"/>
<path d="M576.4 92.3H565.4V96.6M575.8 97.2V101.3H563.5" fill="none" stroke="#111" stroke-width="1.4"/>
<path d="M562.6 96.3H568.2L565.4 99.9ZM573.2 97.7H578.9L576 94Z" fill="#111"/>
<!-- cyan A -->
<rect x="602.2" y="86" width="22.8" height="18.3" fill="url(#dc)" stroke="#111" stroke-width="1.6"/>
<path d="M605.8 95.4H614.5" stroke="#111" stroke-width="1.8"/>
<path d="M613.8 89.8L619.8 95.4L613.8 101.1Z" fill="#111"/>
<path d="M620.5 88.9V101.7" stroke="#111" stroke-width="1.6"/>
<!-- cyan B -->
<rect x="637.5" y="86.2" width="22.4" height="18.1" fill="url(#dc)" stroke="#111" stroke-width="1.6"/>
<g stroke="#111"><path d="M642.1 88.6V101.9" stroke-width="1.6"/><path d="M645 90.1V100.8" stroke-width="1.4"/><path d="M647.9 92.3V98.6" stroke-width="1.2"/><path d="M655.5 88.9V101.9M653.4 95.6H655.5" stroke-width="1.2"/></g>
<rect x="650.2" y="93.8" width="1.6" height="3.3" fill="#111"/>
<!-- cyan C -->
<rect x="672.6" y="86.2" width="22.6" height="18.1" fill="url(#dc)" stroke="#111" stroke-width="1.6"/>
<g stroke="#111"><path d="M675.9 89.7V100.8" stroke-width="1.5"/><path d="M678 91.3V99.4" stroke-width="1.2"/><path d="M688.6 91.3V99.6" stroke-width="1.2"/><path d="M692.1 89.7V101.1" stroke-width="1.6"/><path d="M681.5 95.6H687" stroke-width="1.2"/></g>
<path d="M681.1 93.6L684.6 95.6L681.1 97.6ZM687.4 93.6L683.9 95.6L687.4 97.6Z" fill="#111"/>
<!-- transport -->
<path d="M719.8 87.3L737.8 95.2L719.8 103.1Z" fill="#000"/>
<rect x="755.3" y="87.3" width="6.1" height="15.8" fill="#000"/>
<rect x="766.2" y="87.3" width="6.2" height="15.8" fill="#000"/>
<rect x="790.7" y="87.3" width="16.8" height="15.8" fill="#000"/>
<rect x="825.5" y="87.3" width="3.4" height="15.8" fill="#000"/>
<path d="M843 87.3V103.1L828.8 95.2Z" fill="#000"/>
<path d="M861 87.3V103.1L874.4 95.2Z" fill="#000"/>
<rect x="874.3" y="87.3" width="3.4" height="15.8" fill="#000"/>
<!-- speaker -->
<ellipse cx="32.8" cy="146.4" rx="5.2" ry="8.8" fill="url(#gold)" stroke="#a06a08" stroke-width="0.7" transform="rotate(14 32.8 146.4)"/>
<ellipse cx="46.6" cy="150" rx="11.8" ry="15.2" fill="#4a4a4a" transform="rotate(-22 46.6 150)"/>
<ellipse cx="46.9" cy="150.2" rx="10" ry="13.2" fill="url(#spk)" transform="rotate(-22 46.6 150)"/>
<ellipse cx="47.6" cy="151" rx="7.4" ry="10.4" fill="none" stroke="#f4f4f4" stroke-width="1.3" transform="rotate(-22 46.6 150)"/>
<ellipse cx="42.8" cy="149" rx="5.2" ry="7.2" fill="url(#dome)" stroke="#3a3a3a" stroke-width="1" transform="rotate(-15 42.8 149)"/>
<!-- slider thumb -->
<path d="M151.6 139.4Q151.6 138.4 152.6 138.4H160.4Q161.4 138.4 161.4 139.4V151.4L156.5 156.4L151.6 151.4Z" fill="url(#thumb)" stroke="#8a9098" stroke-width="0.8"/>
<path d="M152 139.6H161" stroke="#3cac4c" stroke-width="2"/>
<path d="M152.2 151.2L156.5 155.6L160.8 151.2" fill="none" stroke="#30a040" stroke-width="2"/>
<!-- music doc -->
<path d="M25.2 210.8H40L43.5 214.3V232.6H25.2Z" fill="#f0f0f2" stroke="#9a9a9a" stroke-width="0.9"/>
<path d="M26 233H44V215" fill="none" stroke="#505050" stroke-width="1.2"/>
<path d="M35.2 214L37 225.6" stroke="#4848c8" stroke-width="2.2"/>
<path d="M35.2 212.5Q39 213 42 217L41 218Q39 216 36 216Z" fill="#5050d0"/>
<ellipse cx="32.6" cy="227.6" rx="4.4" ry="4" fill="#4848c8"/>
<ellipse cx="31.6" cy="226.6" rx="1.8" ry="1.4" fill="#a0a0f0"/>
<!-- CDs -->
<defs><radialGradient id="cdg" cx="0.5" cy="0.5" r="0.5"><stop offset="0" stop-color="#f8f8ff"/><stop offset="0.5" stop-color="#e0e0f0"/><stop offset="1" stop-color="#c4c4e0"/></radialGradient></defs>
<g><circle cx="150.6" cy="223.6" r="11" fill="url(#cdg)" stroke="#707070" stroke-width="1.5"/>
<path d="M139.8 220A11 11 0 0 0 142.5 229.5L148.5 224.5Z" fill="#a8a8ec" opacity="0.9"/>
<path d="M158.8 217.5A11 11 0 0 1 157 231.5L152.5 225.5Z" fill="#5050c0" opacity="0.85"/>
<path d="M147 232A11 11 0 0 0 155 233L152 226Z" fill="#4848c0" opacity="0.8"/>
<circle cx="150.6" cy="223.6" r="2.3" fill="#3a3030"/>
</g>
<g transform="translate(116.4 0)"><circle cx="150.6" cy="223.6" r="11" fill="url(#cdg)" stroke="#707070" stroke-width="1.5"/>
<path d="M139.8 220A11 11 0 0 0 142.5 229.5L148.5 224.5Z" fill="#a8a8ec" opacity="0.9"/>
<path d="M158.8 217.5A11 11 0 0 1 157 231.5L152.5 225.5Z" fill="#5050c0" opacity="0.85"/>
<path d="M147 232A11 11 0 0 0 155 233L152 226Z" fill="#4848c0" opacity="0.8"/>
<circle cx="150.6" cy="223.6" r="2.3" fill="#3a3030"/>
</g>
</svg>

</body></html>
